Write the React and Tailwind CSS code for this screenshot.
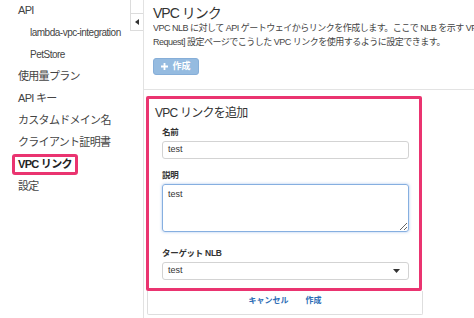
import React from "react";

const font = { fontFamily: '"Liberation Sans", "Noto Sans CJK JP", sans-serif' };

function NavItem({ children, sub }) {
  return (
    <div
      className={
        "h-[22px] flex items-center whitespace-nowrap text-[#444] " +
        (sub ? "pl-[30px] text-[10px] tracking-[-0.5px]" : "pl-[18px] text-[11px] tracking-[-0.7px]")
      }
    >
      {children}
    </div>
  );
}

export default function App() {
  return (
    <div className="w-[474px] h-[318px] overflow-hidden bg-white flex" style={font}>
      {/* Sidebar */}
      <div className="w-[130px] shrink-0 flex flex-col pt-0">
        <div className="mt-[-1px]" />
        <NavItem>API</NavItem>
        <NavItem sub>lambda-vpc-integration</NavItem>
        <NavItem sub>PetStore</NavItem>
        <NavItem>使用量プラン</NavItem>
        <NavItem>API キー</NavItem>
        <NavItem>カスタムドメイン名</NavItem>
        <NavItem>クライアント証明書</NavItem>
        <div className="h-[22px] flex items-center pl-[12px]">
          <span className="h-[21px] flex items-center border-[3px] border-[#ea3470] rounded-[3px] px-[3px] text-[11px] tracking-[-0.7px] font-bold text-[#222] whitespace-nowrap">
            VPC リンク
          </span>
        </div>
        <NavItem>設定</NavItem>
      </div>

      {/* Collapse tab gutter */}
      <div className="w-[13px] shrink-0 flex flex-col">
        <div className="h-[13px] border-l border-[#dcdcdc]" />
        <div className="h-[18px] border-l border-t border-b border-[#dcdcdc] flex items-center justify-center">
          <svg width="4" height="6" viewBox="0 0 4 6">
            <path d="M4 0 L0 3 L4 6 Z" fill="#333" />
          </svg>
        </div>
      </div>

      {/* Main */}
      <div className="flex-1 min-w-0 border-l border-[#e2e2e2] flex flex-col">
        <div className="pl-[9px] flex flex-col">
          <div className="mt-[4px] h-[18px] leading-[18px] text-[14px] tracking-[-1px] text-[#333] whitespace-nowrap">
            VPC リンク
          </div>
          <div className="mt-[-1px] text-[9px] tracking-[-0.5px] leading-[14px] text-[#444] whitespace-nowrap overflow-hidden">
            <div>VPC NLB に対して API ゲートウェイからリンクを作成します。ここで NLB を示す VPC リンクを作成した後、[Integration</div>
            <div>Request] 設定ページでこうした VPC リンクを使用するように設定できます。</div>
          </div>
          <div className="mt-[9px] w-[46px] h-[17px] rounded-[3px] bg-[#95bbe0] border border-[#86aed8] flex items-center justify-center gap-[4px] text-white text-[9px] font-bold">
            <svg width="7" height="7" viewBox="0 0 7 7">
              <path d="M3.5 0 V7 M0 3.5 H7" stroke="#fff" strokeWidth="1.8" />
            </svg>
            <span>作成</span>
          </div>
        </div>

        <div className="mt-[14px] h-px bg-[#e3e3e3]" />

        <div className="pl-[2px] mt-[6px] flex flex-col">
          {/* Highlighted form */}
          <div className="w-[276px] border-[3px] border-[#ea3470] rounded-[2px] flex flex-col pb-[8px]">
            <div className="mt-[6px] ml-[6px] h-[16px] leading-[16px] text-[12px] tracking-[-0.75px] text-[#333] whitespace-nowrap">
              VPC リンクを追加
            </div>
            <div className="pl-[13px] pr-[10px] flex flex-col">
              <div className="mt-[5px] h-[12px] leading-[12px] text-[8.5px] font-bold text-[#333] tracking-[-0.3px]">名前</div>
              <div className="mt-[3px] h-[18px] border border-[#d3d3d3] rounded-[3px] flex items-center pl-[5px] text-[9px] text-[#333]">
                test
              </div>
              <div className="mt-[10px] h-[12px] leading-[12px] text-[8.5px] font-bold text-[#333] tracking-[-0.3px]">説明</div>
              <textarea
                readOnly
                defaultValue="test"
                className="mt-[3px] h-[48px] w-full border border-[#86afe0] rounded-[3px] shadow-[0_0_3px_rgba(100,150,220,0.55)] pl-[5px] pt-[3px] text-[9px] text-[#333] outline-none resize-y"
                style={font}
              />
              <div className="mt-[15px] h-[12px] leading-[12px] text-[8.5px] font-bold text-[#333] tracking-[-0.3px] whitespace-nowrap">
                ターゲット NLB
              </div>
              <div className="mt-[3px] h-[18px] border border-[#d3d3d3] rounded-[3px] flex items-center justify-between pl-[5px] pr-[8px] text-[9px] text-[#333]">
                <span>test</span>
                <svg width="7" height="4" viewBox="0 0 7 4">
                  <path d="M0 0 H7 L3.5 4 Z" fill="#333" />
                </svg>
              </div>
            </div>
          </div>
          {/* Footer */}
          <div className="ml-[1px] w-[276px] h-[24px] border-x border-b border-[#dedede] rounded-b-[2px] flex items-center justify-center gap-[17px] pb-[4px] text-[8px] font-bold text-[#2b6cb5]">
            <span>キャンセル</span>
            <span>作成</span>
          </div>
        </div>
      </div>
    </div>
  );
}
